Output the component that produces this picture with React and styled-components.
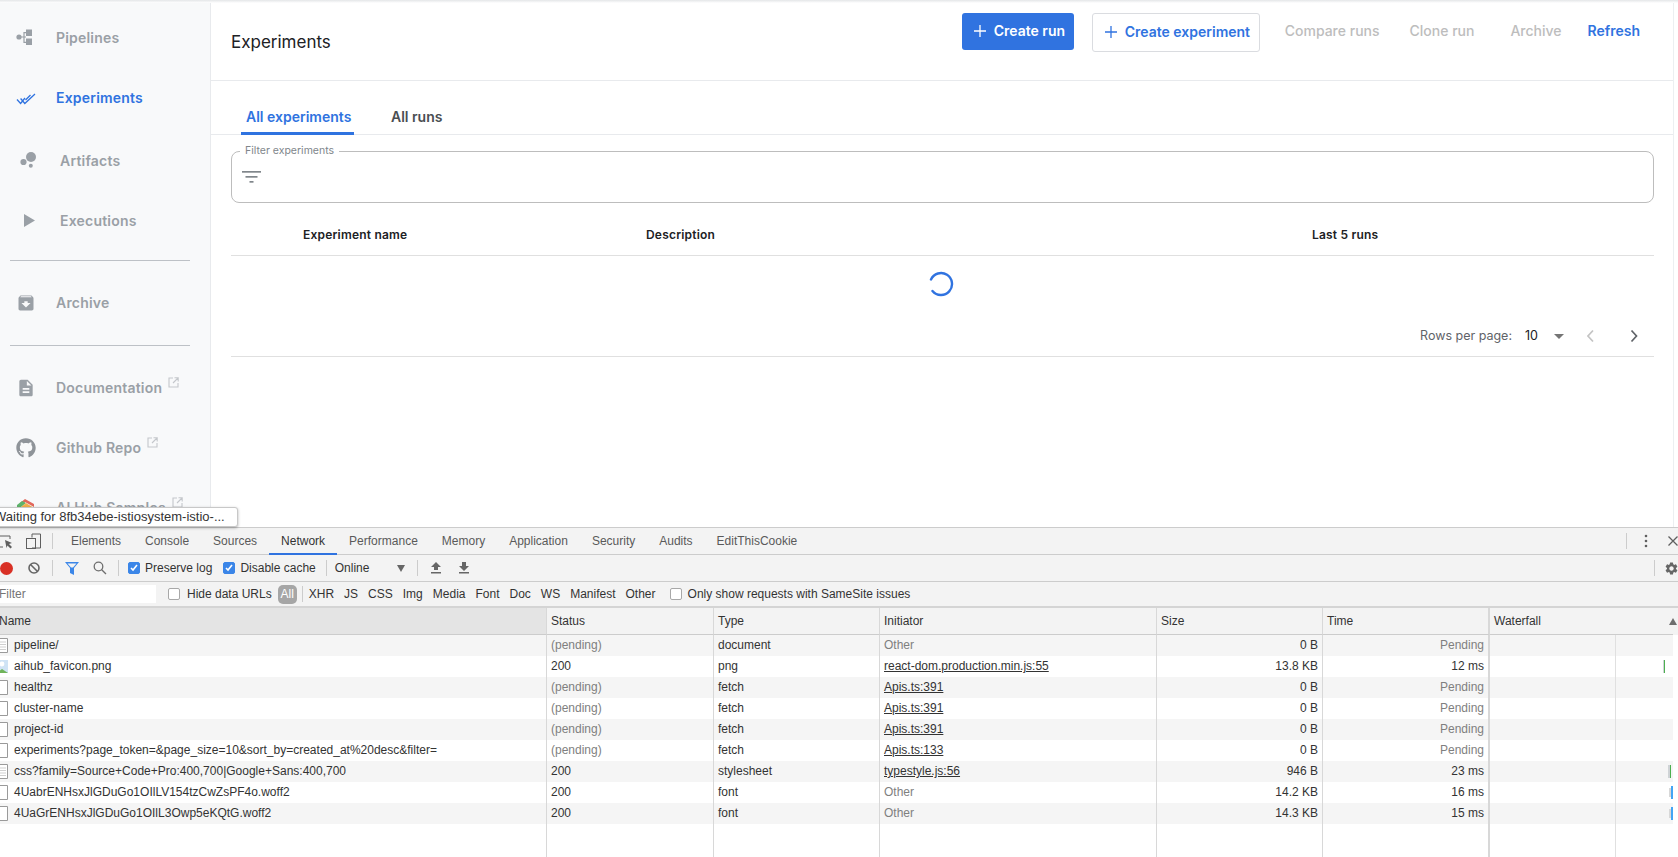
import React from "react";
import styled, { createGlobalStyle } from "styled-components";
import { FaGithub } from "react-icons/fa";
import { MdSettings } from "react-icons/md";

const Global = createGlobalStyle`
  html, body { margin: 0; padding: 0; background: #fff; overflow: hidden; }
  * { box-sizing: border-box; }
`;

const Root = styled.div`
  position: relative;
  width: 1678px;
  height: 857px;
  display: flex;
  flex-direction: column;
  overflow: hidden;
  font-family: Inter, "Liberation Sans", sans-serif;
`;
const TopShadow = styled.div`
  height: 3px;
  flex: none;
  background: linear-gradient(#e4e6e8, #ffffff);
`;
const Main = styled.div`
  height: 524px;
  flex: none;
  display: flex;
  overflow: hidden;
`;
const Sidebar = styled.nav`
  width: 211px;
  flex: none;
  background: #f8f9fa;
  border-right: 1px solid #e8eaed;
  padding-top: 5px;
`;
const NavItem = styled.div`
  height: ${(p) => p.$h || 60}px;
  display: flex;
  align-items: center;
  padding: 0 0 2px 16px;
  gap: ${(p) => p.$gap || 20}px;
  color: ${(p) => (p.$active ? "#2f73e0" : "#9aa0a6")};
  font-size: 14px;
  font-weight: 600;
  letter-spacing: 0.2px;
  white-space: nowrap;
`;
const NavIcon = styled.svg`
  width: 20px;
  height: 20px;
  margin-top: 2px;
  flex: none;
  fill: currentColor;
`;
const GithubSlot = styled.span`
  width: 20px;
  height: 20px;
  margin-top: 2px;
  flex: none;
  display: flex;
  font-size: 20px;
  color: #8f9499;
`;
const ExtIcon = styled.svg`
  width: 11px;
  height: 11px;
  margin-left: -14px;
  margin-bottom: 9px;
  flex: none;
  fill: none;
  stroke: #c4c7cb;
  stroke-width: 1.1;
`;
const NavRule = styled.hr`
  margin: ${(p) => p.$top}px 20px ${(p) => p.$bottom}px 10px;
  border: 0;
  border-top: 1px solid #bdc1c6;
`;
const Content = styled.main`
  flex: 1;
  min-width: 0;
  margin-right: 4px;
  border-right: 1px solid #eceff1;
  display: flex;
  flex-direction: column;
`;
const Header = styled.header`
  height: 78px;
  flex: none;
  border-bottom: 1px solid #e8eaed;
  padding: 10px 33px 0 20px;
  display: flex;
  align-items: flex-start;
`;
const Title = styled.h1`
  margin: 16px auto 0 0;
  font-size: 17px;
  line-height: 26px;
  font-weight: 400;
  color: #202124;
`;
const Primary = styled.div`
  width: 112px;
  height: 37px;
  margin-right: 18px;
  background: #3073e0;
  color: #fff;
  border-radius: 3px;
  display: flex;
  align-items: center;
  padding: 0 0 2px 12px;
  gap: 8px;
  font-size: 14px;
  font-weight: 600;
`;
const Outlined = styled.div`
  width: 168px;
  height: 39px;
  margin-right: 25px;
  background: #fff;
  color: #3073e0;
  border: 1px solid #dadce0;
  border-radius: 3px;
  display: flex;
  align-items: center;
  padding: 0 0 2px 12px;
  gap: 8px;
  font-size: 14px;
  font-weight: 600;
`;
const Plus = styled.svg`
  width: 12px;
  height: 12px;
  stroke: currentColor;
  stroke-width: 1.3;
  flex: none;
`;
const TextAction = styled.div`
  margin-left: ${(p) => p.$left || 0}px;
  height: 37px;
  padding-bottom: 2px;
  display: flex;
  align-items: center;
  font-size: 14px;
  white-space: nowrap;
  color: ${(p) => (p.$on ? "#3073e0" : "#bdbdbd")};
  font-weight: ${(p) => (p.$on ? 600 : 500)};
`;
const Tabs = styled.div`
  height: 54px;
  flex: none;
  border-bottom: 1px solid #e8eaed;
  padding: 0 0 0 30px;
  display: flex;
  align-items: flex-end;
`;
const Tab = styled.div`
  height: 34px;
  width: ${(p) => p.$w}px;
  margin: 0 0 -1px ${(p) => p.$left || 0}px;
  padding: 6px 0 0 5px;
  font-size: 14px;
  line-height: 20px;
  font-weight: 600;
  color: ${(p) => (p.$active ? "#2f73e0" : "#4a4e52")};
  border-bottom: 3px solid ${(p) => (p.$active ? "#2f73e0" : "transparent")};
  white-space: nowrap;
`;
const Body = styled.div`
  padding: 16px 19px 0 20px;
`;
const FilterBox = styled.div`
  position: relative;
  height: 52px;
  border: 1px solid #bdbdbd;
  border-radius: 8px;
  padding: 19px 0 0 10px;
  display: flex;
  align-items: flex-start;
`;
const FilterLegend = styled.span`
  position: absolute;
  left: 8px;
  top: -7px;
  padding: 0 5px;
  background: #fff;
  font-size: 10.5px;
  line-height: 12px;
  color: #80868b;
`;
const FilterGlyph = styled.svg`
  width: 19px;
  height: 13px;
  fill: #80868b;
`;
const HeadRow = styled.div`
  height: 53px;
  border-bottom: 1px solid #e0e0e0;
  padding-top: 24px;
  display: grid;
  grid-template-columns: 343px 666px 1fr;
  padding-left: 72px;
  font-size: 12px;
  line-height: 16px;
  font-weight: 600;
  letter-spacing: 0.2px;
  color: #202124;
`;
const Loading = styled.div`
  height: 54px;
  display: flex;
  justify-content: center;
  padding: 15px 4px 0 0;
`;
const Spinner = styled.svg`
  width: 26px;
  height: 26px;
  fill: none;
  stroke: #3073e0;
  stroke-width: 2.4;
`;
const Pager = styled.div`
  height: 47px;
  border-bottom: 1px solid #e0e0e0;
  padding: 5px 16px 0 0;
  display: flex;
  align-items: center;
  justify-content: flex-end;
  font-size: 12.5px;
  color: #5f6368;
`;
const PagerValue = styled.span`
  margin: 0 16px 0 13px;
  color: #202124;
`;
const PagerArrow = styled.svg`
  width: ${(p) => p.$w}px;
  height: 14px;
  margin-left: ${(p) => p.$left}px;
  fill: ${(p) => p.$fill || "none"};
  stroke: ${(p) => p.$stroke || "none"};
  stroke-width: 1.7;
`;

const Dev = styled.section`
  height: 330px;
  flex: none;
  display: flex;
  flex-direction: column;
  background: #f3f3f3;
  font-family: "Liberation Sans", Arial, sans-serif;
  font-size: 12px;
  color: #333;
`;
const DevTabs = styled.div`
  height: 28px;
  flex: none;
  border-top: 1px solid #ccc;
  border-bottom: 1px solid #ccc;
  display: flex;
  align-items: stretch;
`;
const Sep = styled.span`
  width: 1px;
  height: 16px;
  background: #ccc;
  align-self: center;
  flex: none;
  margin: ${(p) => p.$m || "0"};
`;
const DevGlyph = styled.svg`
  flex: none;
  align-self: center;
  margin: ${(p) => p.$m || "0"};
`;
const GearSlot = styled.span`
  flex: none;
  display: flex;
  margin-right: -1px;
  color: #666;
  font-size: 15px;
`;
const DevTab = styled.div`
  padding: 0 12px;
  margin-bottom: -1px;
  display: flex;
  align-items: center;
  color: ${(p) => (p.$active ? "#333" : "#5a5a5a")};
  border-bottom: 2px solid ${(p) => (p.$active ? "#2f73e0" : "transparent")};
  white-space: nowrap;
`;
const Spacer = styled.span`
  flex: 1;
`;
const ToolRow = styled.div`
  height: 27px;
  flex: none;
  border-bottom: 1px solid #ccc;
  display: flex;
  align-items: center;
  white-space: nowrap;
`;
const Record = styled.span`
  width: 13px;
  height: 13px;
  flex: none;
  border-radius: 50%;
  background: #d93025;
`;
const Check = styled.span`
  width: 12px;
  height: 12px;
  flex: none;
  margin: ${(p) => p.$m || "0"};
  border-radius: 2px;
  background: ${(p) => (p.$on ? "#3b86e8" : "#fff")};
  border: 1px solid ${(p) => (p.$on ? "#3b86e8" : "#a8a8a8")};
  display: flex;
  align-items: center;
  justify-content: center;
`;
const Tick = styled.svg`
  width: 8px;
  height: 8px;
  fill: none;
  stroke: #fff;
  stroke-width: 1.6;
`;
const Label = styled.span`
  margin: ${(p) => p.$m || "0"};
  color: #333;
`;
const FilterRow = styled.div`
  height: 26px;
  flex: none;
  border-bottom: 2px solid #d4d4d4;
  display: flex;
  align-items: center;
  white-space: nowrap;
`;
const FilterInput = styled.div`
  width: 157px;
  height: 18px;
  flex: none;
  background: #fff;
  color: #757575;
  line-height: 19px;
  margin-left: -1px;
`;
const AllPill = styled.span`
  width: 19px;
  height: 19px;
  margin: 0 5px 0 6px;
  flex: none;
  border-radius: 5px;
  background: #a6a6a6;
  color: #fff;
  display: flex;
  align-items: center;
  justify-content: center;
`;
const TypeList = styled.div`
  display: flex;
  gap: 10px;
  margin-left: 6px;
`;
const Grid = styled.div`
  display: grid;
  grid-template-columns: 547px 167px 166px 277px 166px 167px 183px;
  width: 1673px;
  flex: ${(p) => (p.$fill ? "1" : "none")};
  height: ${(p) => (p.$fill ? "auto" : `${p.$h || 21}px`)};
  background: ${(p) => p.$bg || "#fff"};
`;
const DataWrap = styled.div`
  flex: 1;
  min-height: 0;
  display: flex;
  flex-direction: column;
  background: #fff;
`;
const Cell = styled.div`
  border-right: ${(p) => (p.$last ? "0" : `${p.$thick ? 2 : 1}px solid #d8d8d8`)};
  padding: ${(p) => (p.$bare ? "0" : "0 4px")};
  line-height: 21px;
  overflow: hidden;
  white-space: nowrap;
  text-align: ${(p) => (p.$right ? "right" : "left")};
  color: ${(p) => (p.$dim ? "#7f7f7f" : "#333")};
  text-decoration: ${(p) => (p.$link ? "underline" : "none")};
`;
const HeadCell = styled(Cell)`
  line-height: 26px;
  border-bottom: 1px solid #ccc;
  background: ${(p) => (p.$sorted ? "#e4e4e4" : "#f3f3f3")};
  position: relative;
  overflow: visible;
`;
const SortedName = styled.span`
  margin-left: -5px;
`;
const NameCell = styled(Cell)`
  padding: 0;
  display: flex;
  align-items: center;
  gap: 6px;
`;
const Waterfall = styled.div`
  display: grid;
  grid-template-columns: 126px 57px;
  height: 100%;
`;
const WaterLeft = styled.div`
  border-right: 1px solid #e0e0e0;
`;
const WaterRight = styled.div`
  position: relative;
`;
const Bar = styled.span`
  position: absolute;
  top: ${(p) => p.$top || 4}px;
  bottom: ${(p) => p.$top || 4}px;
  left: ${(p) => p.$x}px;
  width: ${(p) => p.$w}px;
  background: ${(p) => p.$c};
`;
const SortMark = styled.span`
  position: absolute;
  right: -4px;
  top: 10px;
  width: 0;
  height: 0;
  border-left: 4px solid transparent;
  border-right: 4px solid transparent;
  border-bottom: 7px solid #6e6e6e;
`;
const Tooltip = styled.div`
  position: absolute;
  left: -10px;
  top: 507px;
  width: 248px;
  height: 20px;
  padding-left: 3px;
  background: #fff;
  border: 1px solid #c8c8c8;
  border-radius: 3px;
  box-shadow: 0 1px 3px rgba(0, 0, 0, 0.3);
  font-family: "Liberation Sans", Arial, sans-serif;
  font-size: 13px;
  line-height: 18px;
  color: #333;
  white-space: nowrap;
`;

const Ext = () => (
  <ExtIcon viewBox="0 0 11 11">
    <path d="M5 1H1v9h9V6M6.5 .8h3.7v3.7M10 1L5 6" />
  </ExtIcon>
);
const PlusIcon = () => (
  <Plus viewBox="0 0 12 12">
    <path d="M6 0v12M0 6h12" />
  </Plus>
);
const TickIcon = () => (
  <Tick viewBox="0 0 8 8">
    <path d="M1 4l2 2 4-5" />
  </Tick>
);

const FileGlyph = ({ kind }) => (
  <svg width="8" height="21" viewBox="0 0 8 21" style={{ flex: "none" }}>
    {kind === "img" ? (
      <>
        <rect x="-3" y="4" width="11" height="13" fill="#cfe3f5" />
        <path d="M-3 17l5-4 6 4z" fill="#6fb35a" />
        <circle cx="2" cy="8" r="2.4" fill="#fff" />
      </>
    ) : (
      <>
        <path d="M-3 3.5H7.500v14H-3" fill="#fff" stroke="#9a9a9a" />
        {kind === "doc" && (
          <path d="M-3 7h9M-3 9.500h9M-3 12h9M-3 14.500h9" stroke="#cfcfcf" />
        )}
      </>
    )}
  </svg>
);

const rows = [
  ["pipeline/", "doc", "(pending)", "document", "Other", "0 B", "Pending"],
  ["aihub_favicon.png", "img", "200", "png", "react-dom.production.min.js:55", "13.8 KB", "12 ms", "g1"],
  ["healthz", "blank", "(pending)", "fetch", "Apis.ts:391", "0 B", "Pending"],
  ["cluster-name", "blank", "(pending)", "fetch", "Apis.ts:391", "0 B", "Pending"],
  ["project-id", "blank", "(pending)", "fetch", "Apis.ts:391", "0 B", "Pending"],
  ["experiments?page_token=&page_size=10&sort_by=created_at%20desc&filter=", "blank", "(pending)", "fetch", "Apis.ts:133", "0 B", "Pending"],
  ["css?family=Source+Code+Pro:400,700|Google+Sans:400,700", "doc", "200", "stylesheet", "typestyle.js:56", "946 B", "23 ms", "g2"],
  ["4UabrENHsxJlGDuGo1OIlLV154tzCwZsPF4o.woff2", "blank", "200", "font", "Other", "14.2 KB", "16 ms", "b"],
  ["4UaGrENHsxJlGDuGo1OIlL3Owp5eKQtG.woff2", "blank", "200", "font", "Other", "14.3 KB", "15 ms", "b"],
];

const Marks = ({ type }) => {
  if (type === "g1")
    return (
      <>
        <Bar $x={47} $w={1} $c="#cfd3d6" />
        <Bar $x={48} $w={1} $c="#4caf50" />
      </>
    );
  if (type === "g2")
    return (
      <>
        <Bar $x={52} $w={2} $c="#cfd3d6" />
        <Bar $x={54} $w={1} $c="#4caf50" />
      </>
    );
  if (type === "b")
    return (
      <>
        <Bar $x={53} $w={2} $c="#d8d8d8" $top={6} />
        <Bar $x={55} $w={2} $c="#42a5f5" />
      </>
    );
  return null;
};

const navTop = [
  {
    label: "Pipelines",
    icon: (
      <NavIcon viewBox="0 0 20 20">
        <circle cx="3" cy="9" r="2.6" />
        <rect x="10" y="1.5" width="6" height="6.5" />
        <rect x="10" y="10.5" width="6" height="6.5" />
        <path d="M5 8.4h2.4V4h2.6v1.2H8.600v3.2H10v1.2H8.600v4.2H10V15H7.400V9.600H5z" />
      </NavIcon>
    ),
  },
  {
    label: "Experiments",
    active: true,
    icon: (
      <NavIcon viewBox="0 0 20 20" fill="none" stroke="currentColor" strokeWidth="1.3" style={{ fill: "none" }}>
        <path d="M1 11.500l3.600 4L9 10M4.600 10.500L8.800 15.500L19 6M9.500 12l5-5" />
      </NavIcon>
    ),
  },
  {
    label: "Artifacts",
    gap: 24,
    h: 66,
    icon: (
      <NavIcon viewBox="0 0 20 20">
        <circle cx="15" cy="6" r="5" />
        <circle cx="7.5" cy="11" r="3.1" />
        <circle cx="14.8" cy="14.8" r="2" />
      </NavIcon>
    ),
  },
  {
    label: "Executions",
    gap: 24,
    h: 54,
    icon: (
      <NavIcon viewBox="0 0 20 20">
        <path d="M8 3l11 6.500L8 16z" />
      </NavIcon>
    ),
  },
];

export default function App() {
  return (
    <Root>
      <Global />
      <TopShadow />
      <Main>
        <Sidebar>
          {navTop.map((n) => (
            <NavItem key={n.label} $active={n.active} $gap={n.gap} $h={n.h}>
              {n.icon}
              {n.label}
            </NavItem>
          ))}
          <NavRule $top={12} $bottom={12} />
          <NavItem>
            <NavIcon viewBox="0 0 24 24">
              <path d="M20.54 5.23l-1.39-1.68C18.88 3.21 18.47 3 18 3H6c-.47 0-.88.21-1.16.55L3.46 5.23C3.17 5.57 3 6.02 3 6.5V19c0 1.1.9 2 2 2h14c1.1 0 2-.9 2-2V6.5c0-.48-.17-.93-.46-1.27zM12 17.5L6.5 12H10v-2h4v2h3.5L12 17.5zM5.12 5l.81-1h12l.94 1H5.12z" />
            </NavIcon>
            Archive
          </NavItem>
          <NavRule $top={12} $bottom={12} />
          <NavItem>
            <NavIcon viewBox="0 0 24 24">
              <path d="M14 2H6c-1.1 0-1.99.9-1.99 2L4 20c0 1.1.89 2 1.99 2H18c1.1 0 2-.9 2-2V8l-6-6zm2 16H8v-2h8v2zm0-4H8v-2h8v2zm-3-5V3.5L18.5 9H13z" />
            </NavIcon>
            Documentation
            <Ext />
          </NavItem>
          <NavItem>
            <GithubSlot>
              <FaGithub />
            </GithubSlot>
            Github Repo
            <Ext />
          </NavItem>
          <NavItem>
            <NavIcon viewBox="0 0 20 20">
              <path d="M4 5l5-4 9 5v3L9 4 5 8z" fill="#e2685c" />
              <path d="M1 7l5-4 4 2-5 4v2L1 9z" fill="#5fb36b" />
              <path d="M5 9l5-4 8 5-5 4z" fill="#f1b04c" />
            </NavIcon>
            AI Hub Samples
            <Ext />
          </NavItem>
        </Sidebar>
        <Content>
          <Header>
            <Title>Experiments</Title>
            <Primary>
              <PlusIcon />
              Create run
            </Primary>
            <Outlined>
              <PlusIcon />
              Create experiment
            </Outlined>
            <TextAction>Compare runs</TextAction>
            <TextAction $left={30}>Clone run</TextAction>
            <TextAction $left={36}>Archive</TextAction>
            <TextAction $left={26} $on>
              Refresh
            </TextAction>
          </Header>
          <Tabs>
            <Tab $active $w={113}>All experiments</Tab>
            <Tab $w={100} $left={32}>All runs</Tab>
          </Tabs>
          <Body>
            <FilterBox>
              <FilterLegend>Filter experiments</FilterLegend>
              <FilterGlyph viewBox="0 0 19 13">
                <rect x="0" y="0" width="19" height="1.7" />
                <rect x="3.5" y="5" width="12" height="1.7" />
                <rect x="7.5" y="10" width="4" height="1.7" />
              </FilterGlyph>
            </FilterBox>
            <HeadRow>
              <span>Experiment name</span>
              <span>Description</span>
              <span>Last 5 runs</span>
            </HeadRow>
            <Loading>
              <Spinner viewBox="0 0 26 26">
                <path d="M3 8.500A11 11 0 1 1 4.500 20" strokeLinecap="round" />
              </Spinner>
            </Loading>
            <Pager>
              Rows per page:
              <PagerValue>10</PagerValue>
              <PagerArrow $w={10} $left={0} $fill="#757575" viewBox="0 0 10 14">
                <path d="M0 5h10L5 10z" />
              </PagerArrow>
              <PagerArrow $w={7} $left={23} $stroke="#c4c4c4" viewBox="0 0 7 14">
                <path d="M6 1.500L1 7l5 5.500" fill="none" />
              </PagerArrow>
              <PagerArrow $w={8} $left={36} $stroke="#5f6368" viewBox="0 0 8 14">
                <path d="M1.500 1.500L6.500 7l-5 5.500" fill="none" />
              </PagerArrow>
            </Pager>
          </Body>
        </Content>
      </Main>
      <Dev>
        <DevTabs>
          <DevGlyph width="14" height="15" viewBox="0 0 14 15" $m="0 12px 0 0" fill="none" stroke="#5f5f5f" strokeWidth="1">
            <path d="M-2 2h12v3M-2 13h5" />
            <path d="M5 6l7 3-3 1 3 3-1.500 1.500-3-3-1 2.500z" fill="#5f5f5f" stroke="none" />
          </DevGlyph>
          <DevGlyph width="15" height="16" viewBox="0 0 15 16" fill="none" stroke="#5f5f5f" strokeWidth="1">
            <path d="M6 4.500V1h8.500v14H6" />
            <rect x="0.5" y="5.5" width="9" height="10" />
          </DevGlyph>
          <Sep $m="0 6px 0 11px" />
          {["Elements", "Console", "Sources", "Network", "Performance", "Memory", "Application", "Security", "Audits", "EditThisCookie"].map((t) => (
            <DevTab key={t} $active={t === "Network"}>
              {t}
            </DevTab>
          ))}
          <Spacer />
          <Sep />
          <DevGlyph width="4" height="14" viewBox="0 0 4 14" $m="0 20px 0 17px" fill="#5f5f5f">
            <circle cx="2" cy="2" r="1.3" />
            <circle cx="2" cy="7" r="1.3" />
            <circle cx="2" cy="12" r="1.3" />
          </DevGlyph>
          <DevGlyph width="10" height="10" viewBox="0 0 10 10" stroke="#5f5f5f" strokeWidth="1.3">
            <path d="M.5.5l9 9M9.500.5l-9 9" />
          </DevGlyph>
        </DevTabs>
        <ToolRow>
          <Record />
          <DevGlyph width="12" height="12" viewBox="0 0 12 12" $m="0 0 0 15px" fill="none" stroke="#666" strokeWidth="1.6">
            <circle cx="6" cy="6" r="5" />
            <path d="M2.500 2.500l7 7" />
          </DevGlyph>
          <Sep $m="0 12px 0 12px" />
          <DevGlyph width="14" height="13" viewBox="0 0 14 13" fill="#3b86e8" stroke="none">
            <path d="M0 0h14L9 6v7L5 11V6zM2.500 1.500L6 5.500h2l3.500-4z" fillRule="evenodd" />
          </DevGlyph>
          <DevGlyph width="14" height="14" viewBox="0 0 14 14" $m="0 0 0 14px" fill="none" stroke="#6e6e6e" strokeWidth="1.3">
            <circle cx="5.500" cy="5.500" r="4.300" />
            <path d="M8.700 8.700L13 13" />
          </DevGlyph>
          <Sep $m="0 9px 0 11px" />
          <Check $on>
            <TickIcon />
          </Check>
          <Label $m="0 0 0 5px">Preserve log</Label>
          <Check $on $m="0 0 0 11px">
            <TickIcon />
          </Check>
          <Label $m="0 0 0 5px">Disable cache</Label>
          <Sep $m="0 8px 0 10px" />
          <Label>Online</Label>
          <DevGlyph width="8" height="7" viewBox="0 0 8 7" $m="0 0 0 28px" fill="#666">
            <path d="M0 0h8L4 7z" />
          </DevGlyph>
          <Sep $m="0 0 0 12px" />
          <DevGlyph width="10" height="12" viewBox="0 0 10 12" $m="0 0 0 13px" fill="#666">
            <path d="M5 0l5 5H7v3H3V5H0zM0 10h10v1.500H0z" />
          </DevGlyph>
          <DevGlyph width="10" height="12" viewBox="0 0 10 12" $m="0 0 0 18px" fill="#666">
            <path d="M3 0h4v4h3L5 9 0 4h3zM0 10h10v1.500H0z" />
          </DevGlyph>
          <Spacer />
          <Sep $m="0 9px 0 0" />
          <GearSlot>
            <MdSettings />
          </GearSlot>
        </ToolRow>
        <FilterRow>
          <FilterInput>Filter</FilterInput>
          <Check $m="0 0 0 12px" />
          <Label $m="0 0 0 7px">Hide data URLs</Label>
          <AllPill>All</AllPill>
          <Sep />
          <TypeList>
            {["XHR", "JS", "CSS", "Img", "Media", "Font", "Doc", "WS", "Manifest", "Other"].map((t) => (
              <span key={t}>{t}</span>
            ))}
          </TypeList>
          <Check $m="0 0 0 14px" />
          <Label $m="0 0 0 6px">Only show requests with SameSite issues</Label>
        </FilterRow>
        <Grid $h={27} $bg="#f3f3f3">
          <HeadCell $sorted>
            <SortedName>Name</SortedName>
          </HeadCell>
          <HeadCell>Status</HeadCell>
          <HeadCell>Type</HeadCell>
          <HeadCell>Initiator</HeadCell>
          <HeadCell>Size</HeadCell>
          <HeadCell $thick>Time</HeadCell>
          <HeadCell $last>
            Waterfall
            <SortMark />
          </HeadCell>
        </Grid>
        <DataWrap>
          {rows.map((r, i) => (
            <Grid key={r[0]} $bg={i % 2 === 0 ? "#f5f5f5" : "#fff"}>
              <NameCell>
                <FileGlyph kind={r[1]} />
                {r[0]}
              </NameCell>
              <Cell $dim={r[2] !== "200"}>{r[2]}</Cell>
              <Cell>{r[3]}</Cell>
              <Cell $dim={r[4] === "Other"} $link={r[4] !== "Other"}>
                {r[4]}
              </Cell>
              <Cell $right>{r[5]}</Cell>
              <Cell $right $thick $dim={r[6] === "Pending"}>
                {r[6]}
              </Cell>
              <Cell $last $bare>
                <Waterfall>
                  <WaterLeft />
                  <WaterRight>
                    <Marks type={r[7]} />
                  </WaterRight>
                </Waterfall>
              </Cell>
            </Grid>
          ))}
          <Grid $fill>
            <Cell />
            <Cell />
            <Cell />
            <Cell />
            <Cell />
            <Cell $thick />
            <Cell $last $bare>
              <Waterfall>
                <WaterLeft />
                <WaterRight />
              </Waterfall>
            </Cell>
          </Grid>
        </DataWrap>
      </Dev>
      <Tooltip>Waiting for 8fb34ebe-istiosystem-istio-...</Tooltip>
    </Root>
  );
}
